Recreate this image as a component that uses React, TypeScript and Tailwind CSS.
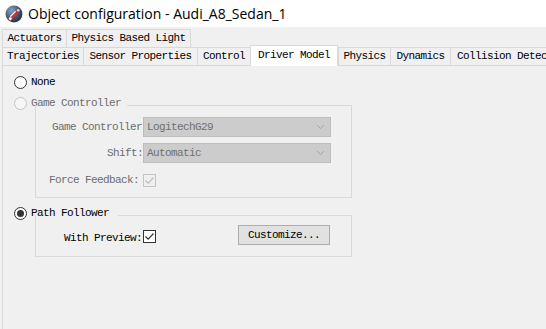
import React from "react";

const mono = { fontFamily: '"Liberation Mono", "DejaVu Sans Mono", monospace' };

function Radio({ checked = false, disabled = false }: { checked?: boolean; disabled?: boolean }) {
  return (
    <div
      className={`w-[13px] h-[13px] rounded-full border flex items-center justify-center shrink-0 ${
        disabled ? "border-[#c4c4c4] bg-[#f7f7f7]" : "border-[#333333] bg-white"
      }`}
    >
      {checked && <div className="w-[7px] h-[7px] rounded-full bg-[#333333]" />}
    </div>
  );
}

function Check({ disabled = false }: { disabled?: boolean }) {
  return (
    <div
      className={`w-[13px] h-[13px] border flex items-center justify-center shrink-0 ${
        disabled ? "border-[#c4c4c4] bg-[#f0f0f0]" : "border-[#333333] bg-white"
      }`}
    >
      <svg width="11" height="11" viewBox="0 0 11 11">
        <path
          d="M1.5 5.5 L4.2 8.2 L9.5 2.5"
          fill="none"
          stroke={disabled ? "#bdbdbd" : "#333333"}
          strokeWidth="1.2"
        />
      </svg>
    </div>
  );
}

function Combo({ text }: { text: string }) {
  return (
    <div className="w-[188px] h-[20px] border border-[#bdbdbd] bg-[#cccccc] flex items-center justify-between pl-[3px] pr-[5px]">
      <span className="text-[#707070]">{text}</span>
      <svg width="9" height="6" viewBox="0 0 9 6">
        <path d="M1 1 L4.5 4.5 L8 1" fill="none" stroke="#a6a6a6" strokeWidth="1" />
      </svg>
    </div>
  );
}

function Tab({ label, w, selected = false, last = false }: { label: string; w?: number; selected?: boolean; last?: boolean }) {
  return (
    <div
      className={`flex items-center border-t border-l border-[#d9d9d9] whitespace-nowrap overflow-hidden ${
        last ? "flex-1 justify-start pl-[6px]" : "justify-center"
      } ${selected ? "bg-white h-[21px] border-r z-10 pb-[2px]" : "bg-[#f0f0f0] h-[18px] mt-[2px]"}`}
      style={w ? { width: w } : undefined}
    >
      {label}
    </div>
  );
}

export default function App() {
  return (
    <div className="w-[546px] h-[329px] bg-[#f0f0f0] overflow-hidden flex flex-col text-[11px] tracking-[-0.6px] text-black" style={mono}>
      {/* Title bar */}
      <div className="h-[27px] bg-white flex items-center pl-[5px] shrink-0">
        <svg width="18" height="18" viewBox="0 0 17 17" className="shrink-0">
          <defs>
            <radialGradient id="g" cx="0.35" cy="0.3" r="0.8">
              <stop offset="0" stopColor="#8aa3bd" />
              <stop offset="0.6" stopColor="#3d5570" />
              <stop offset="1" stopColor="#1c2a3a" />
            </radialGradient>
          </defs>
          <circle cx="8.5" cy="8.5" r="8" fill="url(#g)" />
          <path d="M3 13 L12 4 L14 6 L5 15 Z" fill="#c83232" />
          <path d="M5 11 L10 6" stroke="#ffffff" strokeWidth="1.2" />
          <circle cx="5" cy="13" r="1.4" fill="#ffffff" />
          <circle cx="12.5" cy="5" r="1.2" fill="#f0d0d0" />
        </svg>
        <span
          className="ml-[5px] text-[14px] tracking-normal text-black"
          style={{ fontFamily: '"Open Sans", "Noto Sans", sans-serif' }}
        >
          Object configuration - Audi_A8_Sedan_1
        </span>
      </div>

      {/* Tabs */}
      <div className="pt-[2px] pl-[2px] flex flex-col shrink-0">
        <div className="flex h-[18px]">
          <div className="w-[64px] h-[18px] flex items-center justify-center border-t border-l border-[#d9d9d9]">Actuators</div>
          <div className="w-[125px] h-[18px] flex items-center justify-center border-t border-l border-r border-[#d9d9d9]">Physics Based Light</div>
        </div>
        <div className="flex h-[21px] -mt-[2px] items-start">
          <Tab label="Trajectories" w={81} />
          <Tab label="Sensor Properties" w={114} />
          <Tab label="Control" w={53} />
          <Tab label="Driver Model" w={88} selected />
          <Tab label="Physics" w={52} />
          <Tab label="Dynamics" w={60} />
          <Tab label="Collision Detec" last />
        </div>
      </div>

      {/* Pane */}
      <div className="flex-1 ml-[2px] -mt-px border-t border-l border-[#d9d9d9] bg-[#f0f0f0] pt-[10px] pl-[11px] flex flex-col">
        {/* None */}
        <div className="flex items-center h-[13px]">
          <Radio />
          <span className="ml-[4px]">None</span>
        </div>

        {/* Game Controller group */}
        <div className="flex items-start h-[13px] mt-[8px] w-[337px]">
          <Radio disabled />
          <span className="ml-[4px] text-[#6d6d6d] leading-[13px]">Game Controller</span>
          <div className="flex-1 ml-[6px] mt-[8px] border-t border-[#d9d9d9]" />
        </div>
        <div className="ml-[21px] -mt-[5px] w-[317px] h-[93px] border-l border-r border-b border-[#d9d9d9] pt-[12px] text-[#6d6d6d] grid grid-cols-[107px_188px] auto-rows-min items-center">
          <span className="text-right pr-[1px]">Game Controller</span>
          <Combo text="LogitechG29" />
          <span className="text-right mt-[6px]">Shift:</span>
          <div className="mt-[6px]"><Combo text="Automatic" /></div>
          <span className="text-right mt-[9px] pr-[4px]">Force Feedback:</span>
          <div className="mt-[9px]"><Check disabled /></div>
        </div>

        {/* Path Follower group */}
        <div className="flex items-start h-[13px] mt-[9px] w-[337px]">
          <Radio checked />
          <span className="ml-[4px] leading-[13px]">Path Follower</span>
          <div className="flex-1 ml-[9px] mt-[8px] border-t border-[#d9d9d9]" />
        </div>
        <div className="ml-[21px] -mt-[5px] w-[317px] h-[42px] border-l border-r border-b border-[#d9d9d9] pt-[11px] flex items-start">
          <div className="w-[107px] flex justify-end items-center mt-[4px] pr-[1px]">With Preview:</div>
          <div className="mt-[4px]"><Check /></div>
          <div className="ml-[82px] -mt-px w-[92px] h-[20px] border border-[#adadad] bg-[#e1e1e1] flex items-center justify-center">
            Customize...
          </div>
        </div>
      </div>
    </div>
  );
}
